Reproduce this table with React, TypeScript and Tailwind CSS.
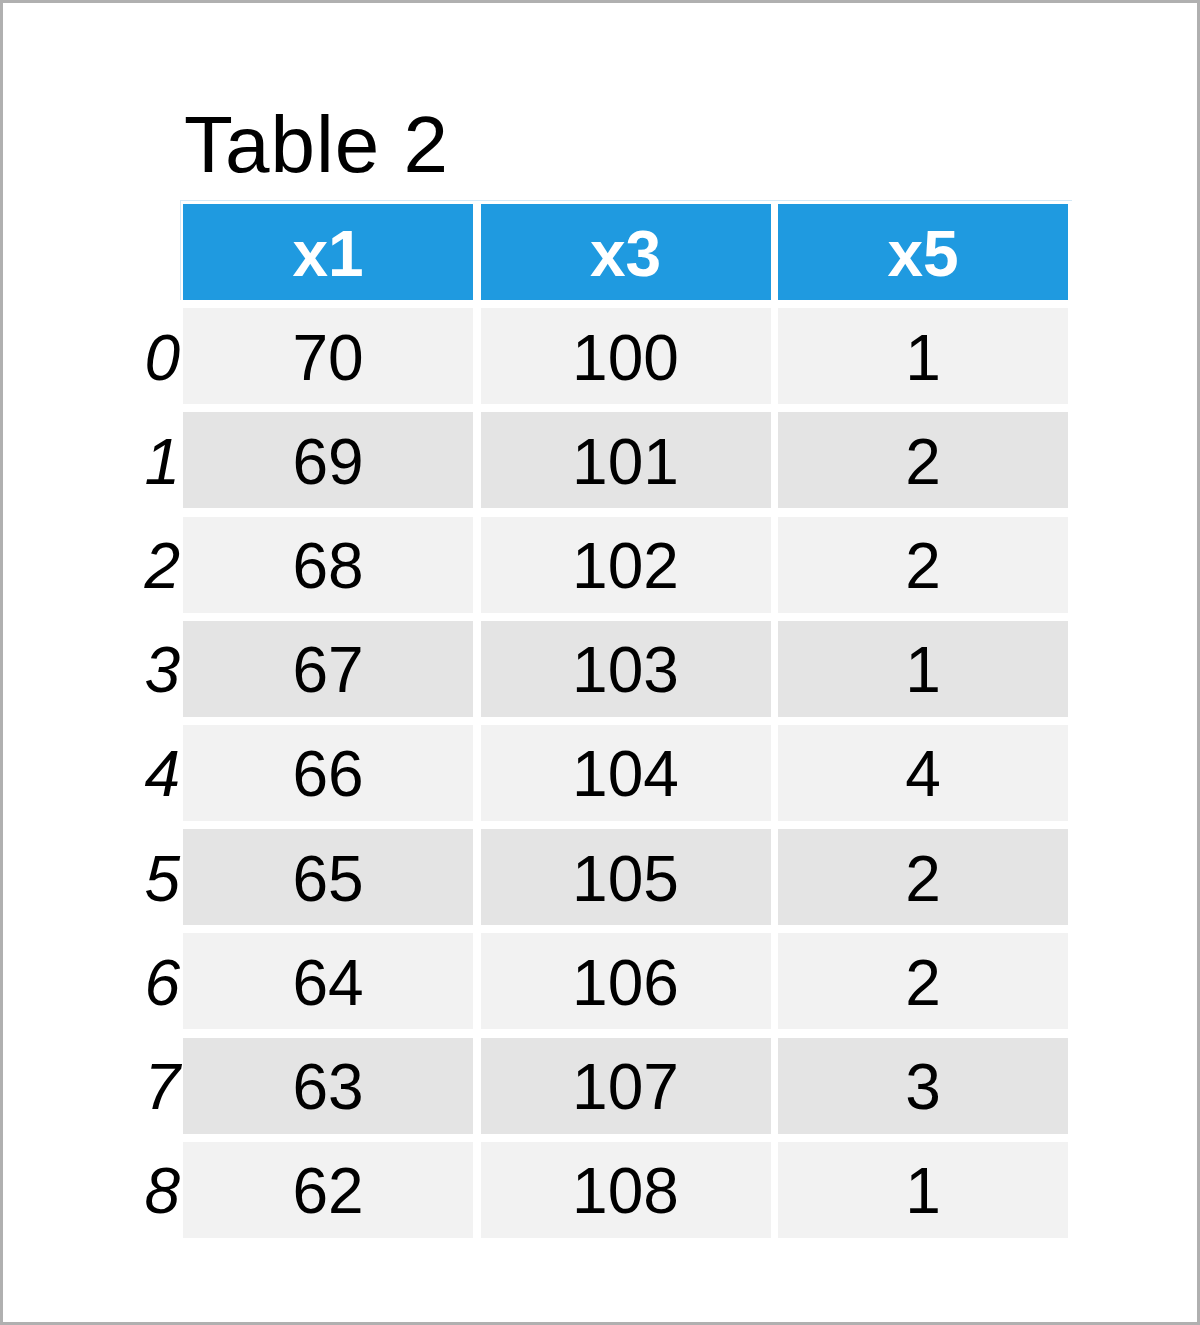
const columns = ['x1', 'x3', 'x5'];

const rows = [
  [70, 100, 1],
  [69, 101, 2],
  [68, 102, 2],
  [67, 103, 1],
  [66, 104, 4],
  [65, 105, 2],
  [64, 106, 2],
  [63, 107, 3],
  [62, 108, 1],
];

export default function App() {
  return (
    <div className="w-[1200px] h-[1325px] bg-white border-[3px] border-[#b0b0b0] font-['Liberation_Sans',Arial,sans-serif] text-black">
      {/* Title */}
      <div className="mt-[102px] ml-[181px] h-[80px] text-[80px] leading-none tracking-[1px]">Table 2</div>

      <div className="mt-[15px] ml-[137px] flex flex-col gap-[8.2px]">
        {/* Header */}
        <div className="flex">
          <div className="w-[40px]" />
          <div className="flex gap-[7.5px] border-t border-l border-[#d3e8f6] pt-[3px] pl-[2px] pr-[4px]">
            {columns.map((col) => (
              <div
                key={col}
                className="w-[290px] h-[96px] pt-[4px] bg-[#1f9ae0] text-white font-bold text-[64px] leading-none flex items-center justify-center"
              >
                {col}
              </div>
            ))}
          </div>
        </div>

        {/* Body rows */}
        {rows.map((row, i) => (
          <div key={i} className="flex h-[96px] items-center">
            <div className="w-[40px] pt-[3px] text-right italic text-[64px] leading-none">{i}</div>
            <div className="ml-[3px] flex gap-[7.5px]">
              {row.map((val, j) => (
                <div
                  key={j}
                  className={`w-[290px] h-[96px] pt-[3px] text-[64px] leading-none flex items-center justify-center ${
                    i % 2 === 0 ? 'bg-[#f2f2f2]' : 'bg-[#e4e4e4]'
                  }`}
                >
                  {val}
                </div>
              ))}
            </div>
          </div>
        ))}
      </div>
    </div>
  );
}
